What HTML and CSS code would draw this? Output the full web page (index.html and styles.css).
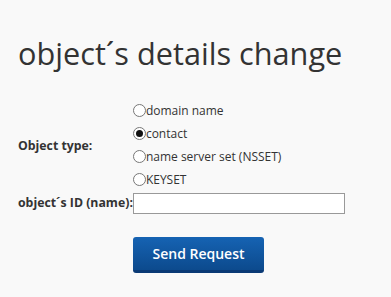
FILE: index.html
```html
<!DOCTYPE html>
<html lang="en">

<head>
    <meta charset="UTF-8">
    <title>object´s details change</title>
    <link rel="stylesheet" href="styles.css">
</head>

<body>
    <div class="content">
        <h1>object´s details change</h1>
        <form>
            <table class="form-table">
                <tr>
                    <th>Object type:</th>
                    <td>
                        <label class="radio"><input type="radio" name="type">domain name</label>
                        <label class="radio"><input type="radio" name="type" checked>contact</label>
                        <label class="radio"><input type="radio" name="type">name server set (NSSET)</label>
                        <label class="radio"><input type="radio" name="type">KEYSET</label>
                    </td>
                </tr>
                <tr>
                    <th>object´s ID (name):</th>
                    <td><input type="text" class="text-input"></td>
                </tr>
            </table>
            <div class="actions">
                <button type="button">Send Request</button>
            </div>
        </form>
    </div>
</body>

</html>
```

FILE: styles.css
```css
body {
    margin: 0;
    background-color: #f9f9f9;
    font-family: 'Open Sans', Arial, sans-serif;
    color: #333;
}

.content {
    padding: 0 18px;
}

h1 {
    margin: 0;
    padding-top: 32px;
    font-size: 30.7px;
    font-weight: normal;
    line-height: 42px;
    color: #333;
}

form {
    margin-top: 25px;
}

.form-table {
    border-collapse: collapse;
}

.form-table th {
    text-align: left;
    font-size: 12.3px;
    font-weight: bold;
    padding: 0;
    white-space: nowrap;
}

.form-table td {
    padding: 0;
    font-size: 12px;
}

.radio {
    display: flex;
    align-items: center;
    height: 23px;
}

.radio input {
    appearance: none;
    -webkit-appearance: none;
    margin: 0;
    width: 13px;
    height: 13px;
    border: 1px solid #777;
    border-radius: 50%;
    background: white;
    box-sizing: border-box;
    display: flex;
    align-items: center;
    justify-content: center;
}

.radio input:checked::after {
    content: "";
    width: 7px;
    height: 7px;
    border-radius: 50%;
    background: #111;
}

.text-input {
    display: block;
    width: 212px;
    height: 21px;
    box-sizing: border-box;
    margin: 2px 0 0;
    border: 1px solid #999;
    background: white;
}

.actions {
    padding-left: 115px;
    margin-top: 23px;
}

button {
    width: 131px;
    height: 36px;
    border: none;
    border-bottom: 3px solid #0a3a75;
    border-radius: 3px;
    background: linear-gradient(#1663b3, #0c4a8d);
    color: white;
    font-family: 'Open Sans', Arial, sans-serif;
    font-size: 14px;
    font-weight: 600;
    cursor: pointer;
}
```
